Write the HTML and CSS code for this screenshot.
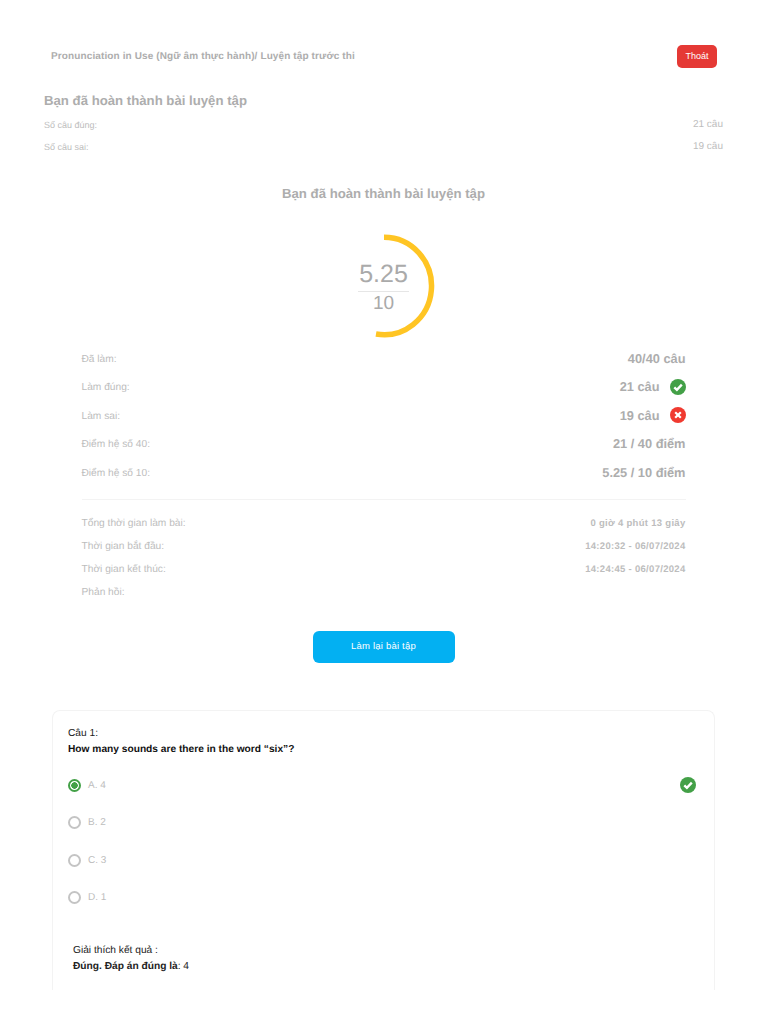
FILE: index.html
```html
<!DOCTYPE html>
<html lang="vi">
<head>
  <meta charset="UTF-8" />
  <title>Kết quả luyện tập</title>
  <link rel="stylesheet" href="styles.css">
</head>
<body>
  <div class="page">
    <header class="topbar">
      <div class="crumb">Pronunciation in Use (Ngữ âm thực hành)/ Luyện tập trước thi</div>
      <button class="exit">Thoát</button>
    </header>

    <section class="summary">
      <h2>Bạn đã hoàn thành bài luyện tập</h2>
      <div class="summary-row"><span>Số câu đúng:</span><span>21 câu</span></div>
      <div class="summary-row"><span>Số câu sai:</span><span>19 câu</span></div>
    </section>

    <section class="result">
      <h1>Bạn đã hoàn thành bài luyện tập</h1>
      <div class="score">
        <svg class="ring" width="104" height="104" viewBox="0 0 104 104">
          <path d="M52 3.250 A47.500 48.750 0 1 1 44 100.050" fill="none" stroke="#ffc524" stroke-width="5.500"/>
        </svg>
        <div class="score-text">
          <div class="score-value">5.25</div>
          <div class="score-max">10</div>
        </div>
      </div>

      <div class="stats">
        <div class="stat"><span>Đã làm:</span><b>40/40 câu</b></div>
        <div class="stat">
          <span>Làm đúng:</span>
          <b>21 câu
            <svg class="mark" width="16" height="16" viewBox="0 0 16 16"><circle cx="8" cy="8" r="8" fill="#43a047"/><path d="M4.300 8.300 L6.900 10.800 L11.800 5.700" fill="none" stroke="#fff" stroke-width="2.400"/></svg>
          </b>
        </div>
        <div class="stat">
          <span>Làm sai:</span>
          <b>19 câu
            <svg class="mark" width="16" height="16" viewBox="0 0 16 16"><circle cx="8" cy="8" r="8" fill="#f03a30"/><path d="M5.200 5.200 L10.800 10.800 M10.800 5.200 L5.200 10.800" fill="none" stroke="#fff" stroke-width="2.200"/></svg>
          </b>
        </div>
        <div class="stat"><span>Điểm hệ số 40:</span><b>21 / 40 điểm</b></div>
        <div class="stat"><span>Điểm hệ số 10:</span><b>5.25 / 10 điểm</b></div>
      </div>

      <div class="times">
        <div class="time"><span>Tổng thời gian làm bài:</span><b>0 giờ 4 phút 13 giây</b></div>
        <div class="time"><span>Thời gian bắt đầu:</span><b>14:20:32 - 06/07/2024</b></div>
        <div class="time"><span>Thời gian kết thúc:</span><b>14:24:45 - 06/07/2024</b></div>
        <div class="time"><span>Phản hồi:</span></div>
      </div>

      <button class="retry">Làm lại bài tập</button>
    </section>

    <section class="question">
      <div class="q-label">Câu 1:</div>
      <div class="q-text">How many sounds are there in the word “six”?</div>

      <div class="answers">
        <div class="answer selected">
          <i class="radio"></i><span>A. 4</span>
          <svg class="mark" width="16" height="16" viewBox="0 0 16 16"><circle cx="8" cy="8" r="8" fill="#43a047"/><path d="M4.300 8.300 L6.900 10.800 L11.800 5.700" fill="none" stroke="#fff" stroke-width="2.400"/></svg>
        </div>
        <div class="answer"><i class="radio"></i><span>B. 2</span></div>
        <div class="answer"><i class="radio"></i><span>C. 3</span></div>
        <div class="answer"><i class="radio"></i><span>D. 1</span></div>
      </div>

      <div class="explain">
        <div>Giải thích kết quả :</div>
        <div><b>Đúng. Đáp án đúng là</b>: 4</div>
      </div>
    </section>
  </div>
</body>
</html>
```

FILE: styles.css
```css
:root {
  --muted: #bdbdbd;
  --muted-strong: #adadad;
  --line: #f3f3f3;
}

* {
  box-sizing: border-box;
}

body {
  margin: 0;
  background: #fff;
  font-family: "Liberation Sans", Arial, sans-serif;
  color: var(--muted);
  text-rendering: geometricPrecision;
}

.page {
  height: 990px;
  overflow: hidden;
  padding: 45px 45px 0 44px;
}

.topbar {
  display: flex;
  justify-content: space-between;
  align-items: center;
  height: 23px;
  padding: 0 6px 0 7px;
}

.crumb {
  font-size: 10px;
  font-weight: 700;
  letter-spacing: 0.12px;
  margin-bottom: 1px;
  color: var(--muted-strong);
}

.exit {
  width: 40px;
  height: 23px;
  padding: 0 0 1px;
  border: none;
  border-radius: 5px;
  background: #e53935;
  color: #fff;
  font: 9px "Liberation Sans", Arial, sans-serif;
}

.summary h2 {
  margin: 24px 0 0;
  font-size: 13.200px;
  line-height: 18px;
  font-weight: 700;
  color: var(--muted-strong);
}

.summary-row {
  display: flex;
  justify-content: space-between;
  align-items: center;
  font-size: 9px;
  line-height: 12px;
  margin-top: 10px;
}

.summary-row span:last-child {
  font-size: 10px;
}

.summary h2 + .summary-row {
  margin-top: 9px;
}

.result {
  display: flex;
  flex-direction: column;
  align-items: center;
}

.result h1 {
  margin: 32px 0 0;
  font-size: 13.200px;
  line-height: 18px;
  font-weight: 700;
  color: var(--muted-strong);
}

.score {
  position: relative;
  width: 104px;
  height: 104px;
  margin-top: 31px;
  display: flex;
  justify-content: center;
  align-items: center;
}

.ring {
  position: absolute;
  left: 0;
  top: 0;
}

.score-text {
  width: 51px;
  margin-top: 2px;
  text-align: center;
  font-weight: 400;
  color: #aaa;
}

.score-value {
  font-size: 25px;
  line-height: 30px;
  border-bottom: 1px solid #e6e6e6;
  padding-bottom: 2px;
}

.score-max {
  font-size: 19px;
  line-height: 22px;
  padding-top: 1px;
}

.stats {
  width: 604px;
  margin-top: 6px;
  padding-bottom: 12px;
  border-bottom: 1px solid var(--line);
}

.stat {
  display: flex;
  justify-content: space-between;
  align-items: center;
  height: 28.500px;
  font-size: 10.200px;
}

.stat span {
  padding-top: 2px;
}

.stat b {
  display: flex;
  align-items: center;
  gap: 10px;
  font-size: 12.800px;
  color: var(--muted-strong);
}

.times {
  width: 604px;
  margin-top: 12px;
}

.time {
  display: flex;
  justify-content: space-between;
  align-items: center;
  height: 23px;
  font-size: 10.200px;
}

.time b {
  font-size: 9.500px;
  letter-spacing: 0.3px;
}

.retry {
  width: 142px;
  height: 32px;
  margin-top: 27px;
  padding: 0 0 2px;
  border: none;
  border-radius: 6px;
  background: #03b0f2;
  color: #fff;
  font: 9.500px "Liberation Sans", Arial, sans-serif;
  letter-spacing: 0.2px;
}

.question {
  margin: 47px 8px 0;
  padding: 15px 15px 0;
  height: 300px;
  border: 1px solid var(--line);
  border-bottom: none;
  border-radius: 8px 8px 0 0;
}

.q-label,
.q-text,
.explain {
  color: #222;
  font-size: 10.200px;
  line-height: 16px;
}

.q-text {
  font-weight: 700;
  color: #111;
}

.answers {
  margin-top: 9px;
}

.answer {
  display: flex;
  align-items: center;
  height: 37.500px;
  font-size: 10px;
}

.answer .mark {
  margin-left: auto;
  margin-right: 3px;
}

.radio {
  width: 13px;
  height: 13px;
  margin-right: 7px;
  border: 2px solid #c4c4c4;
  border-radius: 50%;
}

.selected .radio {
  border-color: #43a047;
  background: radial-gradient(circle, #43a047 0 3px, #fff 3.500px);
}

.explain {
  margin: 26px 0 0 5px;
}
```
